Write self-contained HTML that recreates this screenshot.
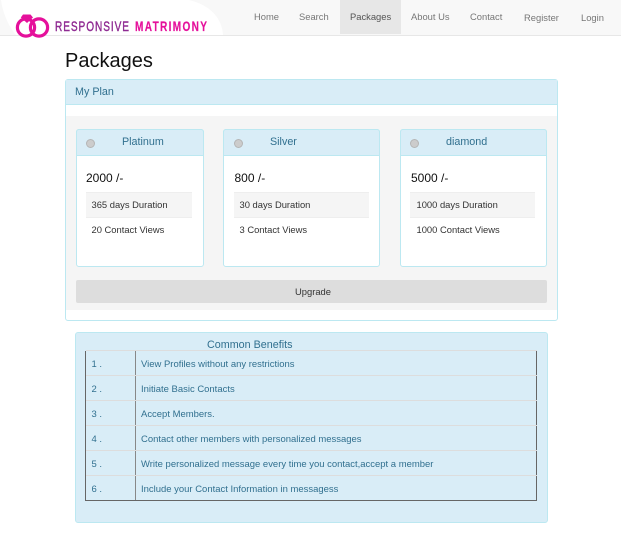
<!DOCTYPE html>
<html><head><meta charset="utf-8"><title>Packages</title>
<style>
html,body{margin:0;padding:0;background:#fff}
#p{position:relative;width:621px;height:551px;overflow:hidden;background:#fff;font-family:"Liberation Sans",sans-serif;font-size:9.4px;color:#333;filter:blur(.3px)}
#p div{position:absolute;box-sizing:border-box}
.t{white-space:nowrap;line-height:14px;height:14px}
.n{color:#777;top:9.5px}
.h{color:#31708f;font-size:10.75px}
.pr{font-size:12px;color:#111;top:171px}
.r{background:#ccc;border:1px solid #b5b5b5;width:9px;height:9px;border-radius:50%;top:138.5px}
.c{top:129px;height:138px;background:#fff;border:1px solid #bce8f1;border-radius:3px}
.ch{top:129px;height:27px;background:#d9edf7;border:1px solid #bce8f1;border-radius:3px 3px 0 0}
.g{top:192px;height:26px;background:#f5f5f5;border-top:1px solid #eee;border-bottom:1px solid #eee}
.d{color:#333}
.l{left:86px;width:451px;height:1px;background:#ddd}
.b{color:#31708f;font-size:9.47px}
</style></head><body><div id="p">
<div style="left:0;top:0;width:621px;height:36px;background:#f8f8f8;border-bottom:1px solid #e7e7e7"></div>
<svg style="position:absolute;left:0;top:0" width="240" height="40" viewBox="0 0 240 40">
<path d="M1 0C3 14 9 27 16 35L223 35C222 18 210 5 189 0Z" fill="#fff"/>
<g fill="none" stroke="#e5109b" stroke-width="3.2"><circle cx="26" cy="27.5" r="8.6"/><circle cx="39" cy="27.5" r="8.6"/></g>
<path d="M23 14.5H30.5L33 17.5L27 23L20.8 17.5Z" fill="#e5109b"/>
<text transform="translate(55 31) scale(.72 1)" font-family="Liberation Sans" font-size="14" fill="#8f2a92" stroke="#8f2a92" stroke-width=".4" textLength="102.8" lengthAdjust="spacing">RESPONSIVE</text>
<text transform="translate(135 31) scale(.72 1)" font-family="Liberation Sans" font-size="14" font-weight="bold" fill="#e5109b" stroke="#e5109b" stroke-width=".2" textLength="100" lengthAdjust="spacing">MATRIMONY</text>
</svg>
<div style="left:340px;top:0;width:61px;height:34px;background:#e7e7e7"></div>
<div class="t n" style="left:254px">Home</div>
<div class="t n" style="left:299px">Search</div>
<div class="t n" style="left:350px;color:#555;top:10px">Packages</div>
<div class="t n" style="left:411px">About Us</div>
<div class="t n" style="left:470px">Contact</div>
<div class="t n" style="left:524px;top:10.5px">Register</div>
<div class="t n" style="left:581px;top:10.5px">Login</div>

<div style="left:65px;top:49px;font-size:20px;line-height:24px;color:#111;white-space:nowrap">Packages</div>

<div style="left:65px;top:79px;width:493px;height:242px;border:1px solid #bce8f1;border-radius:3px;background:#fff"></div>
<div style="left:66px;top:80px;width:491px;height:25px;background:#d9edf7;border-bottom:1px solid #bce8f1"></div>
<div class="t h" style="left:75px;top:85px">My Plan</div>
<div style="left:66px;top:116px;width:491px;height:194px;background:#f5f5f5"></div>

<div class="c" style="left:75.5px;width:128px"></div>
<div class="ch" style="left:75.5px;width:128px"></div>
<div class="r" style="left:86px"></div>
<div class="t h" style="left:122px;top:135px">Platinum</div>
<div class="t pr" style="left:86px">2000 /-</div>
<div class="g" style="left:86px;width:106px"></div>
<div class="t d" style="left:91.5px;top:197.5px">365 days Duration</div>
<div class="t d" style="left:91.5px;top:222.5px">20 Contact Views</div>

<div class="c" style="left:223px;width:157px"></div>
<div class="ch" style="left:223px;width:157px"></div>
<div class="r" style="left:234px"></div>
<div class="t h" style="left:270px;top:135px">Silver</div>
<div class="t pr" style="left:234.5px">800 /-</div>
<div class="g" style="left:234px;width:135px"></div>
<div class="t d" style="left:239.5px;top:197.5px">30 days Duration</div>
<div class="t d" style="left:239.5px;top:222.5px">3 Contact Views</div>

<div class="c" style="left:399.5px;width:147px"></div>
<div class="ch" style="left:399.5px;width:147px"></div>
<div class="r" style="left:410px"></div>
<div class="t h" style="left:446px;top:135px">diamond</div>
<div class="t pr" style="left:411px">5000 /-</div>
<div class="g" style="left:410px;width:125px"></div>
<div class="t d" style="left:416.5px;top:197.5px">1000 days Duration</div>
<div class="t d" style="left:416.5px;top:222.5px">1000 Contact Views</div>

<div style="left:76px;top:280px;width:471px;height:23px;background:#ddd;border-radius:2px"></div>
<div class="t" style="left:295px;top:284.5px">Upgrade</div>

<div style="left:75px;top:332px;width:473px;height:191px;background:#d9edf7;border:1px solid #bce8f1;border-radius:3px"></div>
<div class="t h" style="left:207px;top:337.5px">Common Benefits</div>
<div style="left:85px;top:351px;width:452px;height:150px;border-left:1.5px solid #666;border-right:1.5px solid #666;border-bottom:1.5px solid #666"></div>
<div style="left:135px;top:351px;width:1px;height:149px;background:#888"></div>
<div class="l" style="top:350px"></div>
<div class="l" style="top:375px"></div>
<div class="l" style="top:400px"></div>
<div class="l" style="top:425px"></div>
<div class="l" style="top:450px"></div>
<div class="l" style="top:475px"></div>
<div class="t b" style="left:91.5px;top:358px">1 .</div><div class="t b" style="left:141px;top:358px">View Profiles without any restrictions</div>
<div class="t b" style="left:91.5px;top:383px">2 .</div><div class="t b" style="left:141px;top:383px">Initiate Basic Contacts</div>
<div class="t b" style="left:91.5px;top:408px">3 .</div><div class="t b" style="left:141px;top:408px">Accept Members.</div>
<div class="t b" style="left:91.5px;top:433px">4 .</div><div class="t b" style="left:141px;top:433px">Contact other members with personalized messages</div>
<div class="t b" style="left:91.5px;top:458px">5 .</div><div class="t b" style="left:141px;top:458px">Write personalized message every time you contact,accept a member</div>
<div class="t b" style="left:91.5px;top:483px">6 .</div><div class="t b" style="left:141px;top:483px">Include your Contact Information in messagess</div>
</div></body></html>
